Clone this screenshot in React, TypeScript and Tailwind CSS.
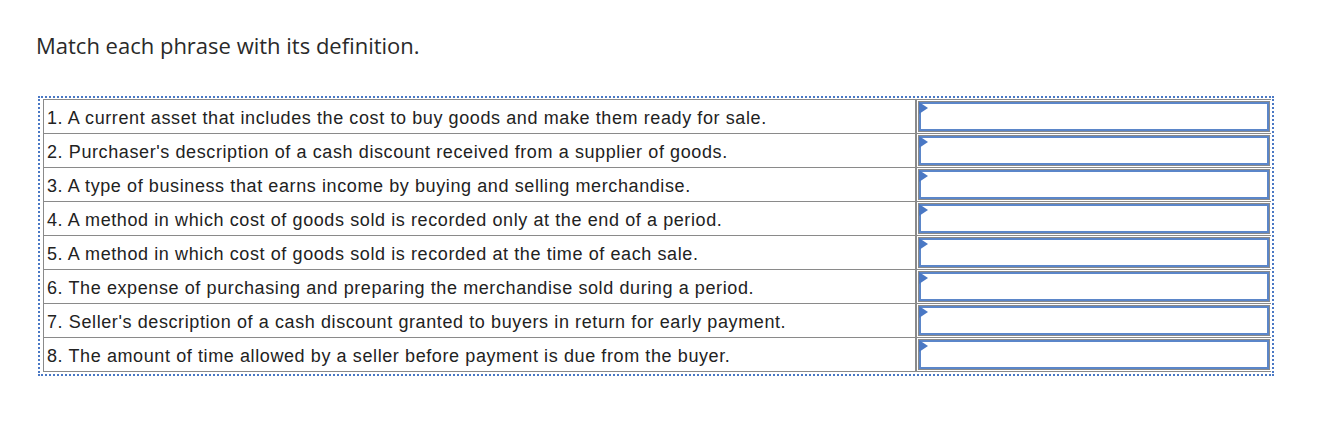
import React from "react";

const rows = [
  "1. A current asset that includes the cost to buy goods and make them ready for sale.",
  "2. Purchaser's description of a cash discount received from a supplier of goods.",
  "3. A type of business that earns income by buying and selling merchandise.",
  "4. A method in which cost of goods sold is recorded only at the end of a period.",
  "5. A method in which cost of goods sold is recorded at the time of each sale.",
  "6. The expense of purchasing and preparing the merchandise sold during a period.",
  "7. Seller's description of a cash discount granted to buyers in return for early payment.",
  "8. The amount of time allowed by a seller before payment is due from the buyer.",
];

export default function App() {
  return (
    <div className="w-[1334px] h-[433px] bg-white" style={{ fontFamily: '"Liberation Sans", Arial, sans-serif' }}>
      <div className="pl-[36px] pt-[30px] text-[22px] leading-[30px] text-[#2a2a2a]" style={{ fontFamily: '"Open Sans", Lato, sans-serif' }}>
        Match each phrase with its definition.
      </div>
      <div className="ml-[38px] mt-[36px] w-[1236px] border-2 border-dotted border-[#4a78c4] pl-[3px] pt-[1px] pb-[2px] pr-[1px]">
        <div className="border-l border-t border-[#8a8a8a]">
          {rows.map((t, i) => (
            <div key={i} className="flex h-[34px] border-b border-[#8a8a8a]">
              <div className="w-[871px] flex items-center pl-[3px] pt-[3px] text-[18px] tracking-[0.6px] text-[#222] leading-none whitespace-nowrap overflow-hidden">
                {t}
              </div>
              <div className="w-[2px] bg-[#8a8a8a]" />
              <div className="relative flex-1 py-[1px] pl-[1px] pr-[1px]">
                <div className="h-full border border-[#8a8a8a]">
                  <div className="h-full border-2 border-[#5b86c9] bg-white" />
                </div>
                <div className="absolute left-[2px] top-[2px] w-0 h-0 border-t-[6px] border-b-[6px] border-l-[9px] border-t-transparent border-b-transparent border-l-[#4a78c4]" />
              </div>
            </div>
          ))}
        </div>
      </div>
    </div>
  );
}
